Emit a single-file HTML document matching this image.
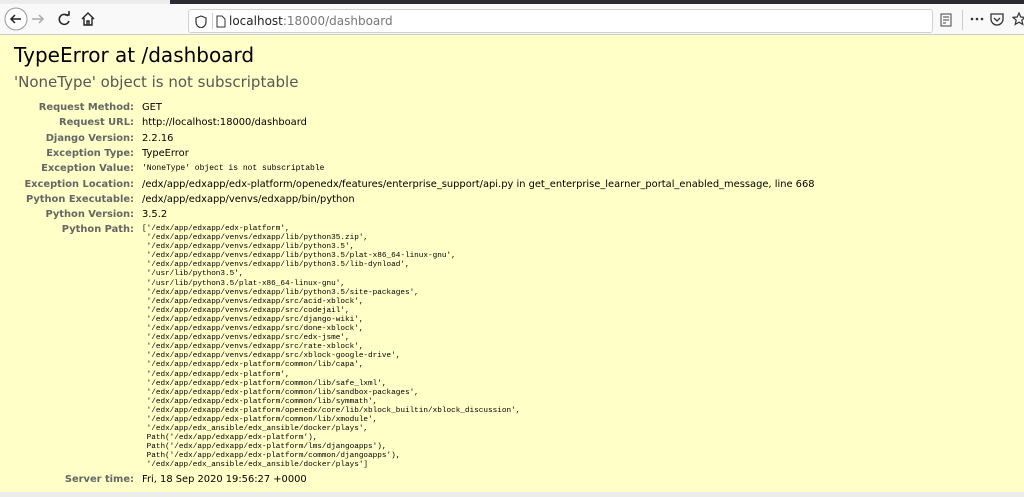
<!DOCTYPE html>
<html><head><meta charset="utf-8"><style>
*{margin:0;padding:0;box-sizing:border-box}
body{width:1024px;height:497px;overflow:hidden;background:#ececec;font-family:"DejaVu Sans","Liberation Sans",sans-serif;position:relative}
.top{position:absolute;left:170px;top:0;width:854px;height:4px;background:#2b2a33}
.bar{position:absolute;top:4px;left:0;width:1024px;height:31px;background:#f9f9fa;border-bottom:1px solid #ccc}
.url{position:absolute;left:188px;top:5px;width:745px;height:24px;background:#fff;border:1px solid #d0d0d0;border-radius:3px}
.url span{position:absolute;left:40px;top:4px;font-size:12px;color:#222}
.url span i{font-style:normal;color:#777}
.page{position:absolute;top:35px;left:0;width:1024px;height:457px;background:#ffffc8}
h1{position:absolute;left:14px;top:8px;font-size:20px;font-weight:normal;color:#000}
h2{position:absolute;left:14px;top:38px;font-size:15px;font-weight:normal;color:#575757}
.row{position:absolute;left:0;width:1024px;font-size:9.9px;color:#000}
.row b{position:absolute;right:890px;color:#666;white-space:nowrap}
.row .v{position:absolute;left:142px;white-space:nowrap}
pre{position:absolute;left:142px;top:190px;font-family:"Liberation Mono",monospace;font-size:7.7px;line-height:9.1px;color:#000}
.mono{font-family:"Liberation Mono",monospace;font-size:8px}
</style></head><body>
<div class="top"></div>
<div class="bar">
<svg style="position:absolute;left:4px;top:3px" width="24" height="24"><circle cx="12" cy="12" r="11" fill="#fff" stroke="#999"/><path d="M17 12H7M11 8l-4 4 4 4" stroke="#222" stroke-width="1.5" fill="none"/></svg>
<svg style="position:absolute;left:30px;top:7px" width="16" height="16"><path d="M2 8h11M9 4l4 4-4 4" stroke="#aaa" stroke-width="1.5" fill="none"/></svg>
<svg style="position:absolute;left:56px;top:7px" width="16" height="16"><path d="M12 5A5 5 0 1 0 13 10M9 4h4V0" stroke="#222" stroke-width="1.5" fill="none"/></svg>
<svg style="position:absolute;left:80px;top:7px" width="16" height="16"><path d="M2 8L8 2l6 6M4 7v7h8V7M7 14v-4h2v4" stroke="#222" stroke-width="1.4" fill="none"/></svg>
<div class="url"><svg style="position:absolute;left:6px;top:5px" width="12" height="13"><path d="M6 1L1 3v4c0 3 2 5 5 6 3-1 5-3 5-6V3z" stroke="#333" stroke-width="1.2" fill="none"/></svg><div style="position:absolute;left:23px;top:3px;width:1px;height:16px;background:#ccc"></div><svg style="position:absolute;left:27px;top:5px" width="10" height="13"><path d="M1 1h5l3 3v8H1z" stroke="#333" fill="none"/></svg><span>localhost<i>:18000/dashboard</i></span></div>
<svg style="position:absolute;left:940px;top:9px" width="12" height="14"><rect x="1" y="1" width="10" height="12" stroke="#444" fill="none"/><path d="M3 4h6M3 7h6M3 10h3" stroke="#444"/></svg>
<div style="position:absolute;left:962px;top:6px;width:1px;height:20px;background:#ccc"></div>
<svg style="position:absolute;left:970px;top:13px" width="14" height="4"><circle cx="2" cy="2" r="1.3" fill="#333"/><circle cx="7" cy="2" r="1.3" fill="#333"/><circle cx="12" cy="2" r="1.3" fill="#333"/></svg>
<svg style="position:absolute;left:990px;top:8px" width="14" height="14"><path d="M1 2h12v5a6 6 0 0 1-12 0z M4 6l3 3 3-3" stroke="#333" stroke-width="1.3" fill="none"/></svg>
<svg style="position:absolute;left:1012px;top:8px" width="14" height="14"><path d="M7 1l1.8 4 4.2.4-3.2 2.8 1 4.2L7 10.2 3.2 12.4l1-4.2L1 5.4 5.2 5z" stroke="#333" stroke-width="1.2" fill="none"/></svg>
</div>
<div class="page">
<h1>TypeError at /dashboard</h1>
<h2>'NoneType' object is not subscriptable</h2>
<div class="row" style="top:67px"><b>Request Method:</b><span class="v">GET</span></div>
<div class="row" style="top:82px"><b>Request URL:</b><span class="v">http://localhost:18000/dashboard</span></div>
<div class="row" style="top:98px"><b>Django Version:</b><span class="v">2.2.16</span></div>
<div class="row" style="top:113px"><b>Exception Type:</b><span class="v">TypeError</span></div>
<div class="row" style="top:128px"><b>Exception Value:</b><span class="v mono" style="top:1px">'NoneType' object is not subscriptable</span></div>
<div class="row" style="top:144px"><b>Exception Location:</b><span class="v">/edx/app/edxapp/edx-platform/openedx/features/enterprise_support/api.py in get_enterprise_learner_portal_enabled_message, line 668</span></div>
<div class="row" style="top:159px"><b>Python Executable:</b><span class="v">/edx/app/edxapp/venvs/edxapp/bin/python</span></div>
<div class="row" style="top:174px"><b>Python Version:</b><span class="v">3.5.2</span></div>
<div class="row" style="top:189px"><b>Python Path:</b></div>
<pre>['/edx/app/edxapp/edx-platform',
 '/edx/app/edxapp/venvs/edxapp/lib/python35.zip',
 '/edx/app/edxapp/venvs/edxapp/lib/python3.5',
 '/edx/app/edxapp/venvs/edxapp/lib/python3.5/plat-x86_64-linux-gnu',
 '/edx/app/edxapp/venvs/edxapp/lib/python3.5/lib-dynload',
 '/usr/lib/python3.5',
 '/usr/lib/python3.5/plat-x86_64-linux-gnu',
 '/edx/app/edxapp/venvs/edxapp/lib/python3.5/site-packages',
 '/edx/app/edxapp/venvs/edxapp/src/acid-xblock',
 '/edx/app/edxapp/venvs/edxapp/src/codejail',
 '/edx/app/edxapp/venvs/edxapp/src/django-wiki',
 '/edx/app/edxapp/venvs/edxapp/src/done-xblock',
 '/edx/app/edxapp/venvs/edxapp/src/edx-jsme',
 '/edx/app/edxapp/venvs/edxapp/src/rate-xblock',
 '/edx/app/edxapp/venvs/edxapp/src/xblock-google-drive',
 '/edx/app/edxapp/edx-platform/common/lib/capa',
 '/edx/app/edxapp/edx-platform',
 '/edx/app/edxapp/edx-platform/common/lib/safe_lxml',
 '/edx/app/edxapp/edx-platform/common/lib/sandbox-packages',
 '/edx/app/edxapp/edx-platform/common/lib/symmath',
 '/edx/app/edxapp/edx-platform/openedx/core/lib/xblock_builtin/xblock_discussion',
 '/edx/app/edxapp/edx-platform/common/lib/xmodule',
 '/edx/app/edx_ansible/edx_ansible/docker/plays',
 Path('/edx/app/edxapp/edx-platform'),
 Path('/edx/app/edxapp/edx-platform/lms/djangoapps'),
 Path('/edx/app/edxapp/edx-platform/common/djangoapps'),
 '/edx/app/edx_ansible/edx_ansible/docker/plays']</pre>
<div class="row" style="top:439px"><b>Server time:</b><span class="v">Fri, 18 Sep 2020 19:56:27 +0000</span></div>
</div>
</body></html>
